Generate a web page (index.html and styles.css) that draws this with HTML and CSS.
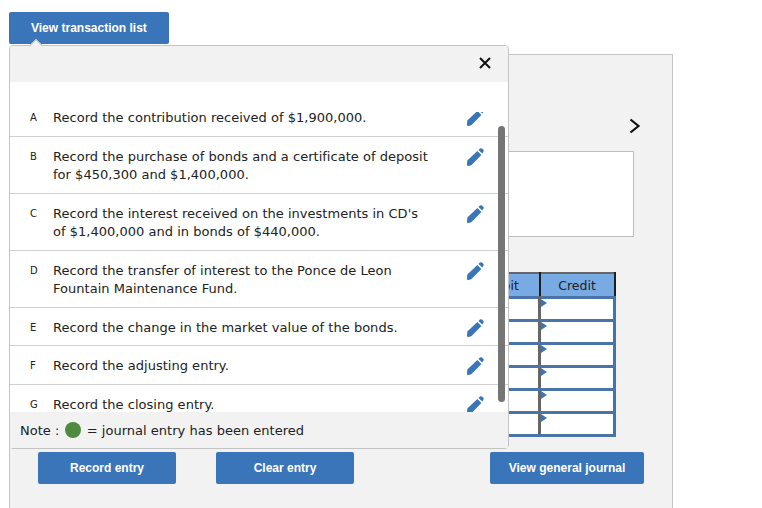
FILE: index.html
```html
<!DOCTYPE html>
<html lang="en">
<head>
<meta charset="utf-8">
<title>Journal entry worksheet</title>
<link rel="stylesheet" href="styles.css">
</head>
<body>
<svg class="defs" width="0" height="0" aria-hidden="true">
  <symbol id="pencil" viewBox="0 0 17 18">
    <path d="M0.3 12.6 L10.4 2.9 L14.4 7 L4.6 17.1 Q2.6 18 0.9 18 Q0 18 0 16.8 Z" fill="#3b75b9"/>
    <path d="M11.5 1.9 L12.9 0.6 Q14 -0.3 15.1 0.6 L16.2 1.7 Q17.2 2.8 16.3 3.9 L15.2 5.6 Z" fill="#3b75b9"/>
  </symbol>
</svg>
<button class="btn btn-list" type="button">View transaction list</button>
<main class="panel">
  <div class="nav">
    <svg class="chev" width="12" height="16" viewBox="0 0 12 16"><path d="M1.5 1.5 L9.5 8 L1.5 14.5" fill="none" stroke="#111" stroke-width="2.2"/></svg>
  </div>
  <div class="box"></div>
  <table class="journal">
    <thead>
      <tr><th class="c-no"></th><th class="c-date"></th><th class="c-acct"></th><th class="c-amt">Debit</th><th class="c-amt">Credit</th></tr>
    </thead>
    <tbody>
      <tr><td></td><td></td><td></td><td></td><td class="tick"></td></tr>
      <tr><td></td><td></td><td></td><td></td><td class="tick"></td></tr>
      <tr><td></td><td></td><td></td><td></td><td class="tick"></td></tr>
      <tr><td></td><td></td><td></td><td></td><td class="tick"></td></tr>
      <tr><td></td><td></td><td></td><td></td><td class="tick"></td></tr>
      <tr><td></td><td></td><td></td><td></td><td class="tick"></td></tr>
    </tbody>
  </table>
  <div class="actions">
    <button class="btn btn-act" type="button">Record entry</button>
    <button class="btn btn-act" type="button">Clear entry</button>
    <button class="btn btn-journal" type="button">View general journal</button>
  </div>
</main>
<section class="pop">
  <span class="pop-arrow"></span>
  <header class="pop-head">
    <svg class="close" width="12" height="12" viewBox="0 0 12 12"><path d="M1 1 L11 11 M11 1 L1 11" fill="none" stroke="#111" stroke-width="2"/></svg>
  </header>
  <div class="pop-list">
    <div class="row row-first"><span class="key">A</span><p>Record the contribution received of $1,900,000.</p><svg class="pen pen-clip"><use href="#pencil"/></svg></div>
    <div class="row"><span class="key">B</span><p>Record the purchase of bonds and a certificate of deposit for $450,300 and $1,400,000.</p><svg class="pen"><use href="#pencil"/></svg></div>
    <div class="row"><span class="key">C</span><p>Record the interest received on the investments in CD's of $1,400,000 and in bonds of $440,000.</p><svg class="pen"><use href="#pencil"/></svg></div>
    <div class="row"><span class="key">D</span><p>Record the transfer of interest to the Ponce de Leon Fountain Maintenance Fund.</p><svg class="pen"><use href="#pencil"/></svg></div>
    <div class="row"><span class="key">E</span><p>Record the change in the market value of the bonds.</p><svg class="pen"><use href="#pencil"/></svg></div>
    <div class="row"><span class="key">F</span><p>Record the adjusting entry.</p><svg class="pen"><use href="#pencil"/></svg></div>
    <div class="row"><span class="key">G</span><p>Record the closing entry.</p><svg class="pen"><use href="#pencil"/></svg></div>
    <span class="scroll"></span>
  </div>
  <footer class="note">Note : <span class="dot"></span> = journal entry has been entered</footer>
</section>
</body>
</html>
```
FILE: styles.css
```css
html, body { margin: 0; height: 508px; overflow: hidden; background: #fff; }
body {
  position: relative;
  box-sizing: border-box;
  padding: 12px 0 0 9px;
  display: flex;
  flex-direction: column;
  align-items: flex-start;
  font-family: "DejaVu Sans", Verdana, sans-serif;
  font-size: 13px;
  color: #222;
}
.defs { position: absolute; }
.btn {
  border: 0;
  border-radius: 2px;
  background: #3b75b9;
  color: #fff;
  font-family: "Liberation Sans", Arial, sans-serif;
  font-weight: 700;
  font-size: 12px;
  padding: 0;
  height: 32px;
}
.btn-list { width: 160px; flex: none; text-align: left; padding-left: 22px; }
.panel {
  box-sizing: border-box;
  flex: 1;
  width: 664px;
  margin-top: 10px;
  border: 1px solid #c4c4c4;
  border-bottom: 0;
  background: #f2f2f2;
  display: flex;
  flex-direction: column;
}
.nav {
  box-sizing: border-box;
  height: 96px;
  padding: 63px 31px 0 0;
  display: flex;
  justify-content: flex-end;
  align-items: flex-start;
}
.chev { display: block; }
.box {
  box-sizing: border-box;
  align-self: flex-end;
  width: 584px;
  height: 86px;
  margin-right: 38px;
  border: 1px solid #bdbdbd;
  background: #fff;
}
.journal {
  align-self: flex-end;
  width: 570px;
  margin: 35px 56px 0 0;
  border-collapse: collapse;
  table-layout: fixed;
}
.journal th {
  height: 22px;
  padding: 0;
  background: #78abe3;
  border: 2px solid #1f1f1f;
  border-top-color: #666;
  font-weight: 400;
  font-size: 12.5px;
  color: #222;
}
.journal td {
  height: 20px;
  padding: 0;
  background: #fff;
  border: 3px solid #4a74a8;
  border-left-color: #666;
  border-right-color: #666;
}
.journal td:last-child { border-right-color: #3b75b9; }
.c-no { width: 30px; }
.c-date { width: 60px; }
.c-amt { width: 73px; }
.tick { position: relative; }
.tick::before {
  content: "";
  position: absolute;
  top: 0;
  left: 0;
  border-left: 6px solid #3b75b9;
  border-top: 4px solid transparent;
  border-bottom: 4px solid transparent;
}
.actions { display: flex; margin: 15px 0 0 28px; }
.btn-act { width: 138px; margin-right: 40px; }
.btn-journal { width: 154px; margin-left: 96px; }
.pop {
  position: absolute;
  left: 9px;
  top: 45px;
  width: 500px;
  height: 404px;
  box-sizing: border-box;
  border: 1px solid #c4c4c4;
  border-radius: 4px;
  background: #fff;
  display: flex;
  flex-direction: column;
  letter-spacing: 0.02px;
}
.pop-arrow {
  position: absolute;
  left: 21px;
  top: -5px;
  width: 9px;
  height: 9px;
  background: #f2f2f2;
  border-left: 1px solid #c4c4c4;
  border-top: 1px solid #c4c4c4;
  transform: rotate(45deg);
}
.pop-head {
  height: 36px;
  flex: none;
  display: flex;
  justify-content: flex-end;
  padding: 11px 17px 0 0;
  box-sizing: border-box;
  background: #f2f2f2;
  border-radius: 4px 4px 0 0;
}
.close { display: block; }
.pop-list { position: relative; flex: 1; overflow: hidden; }
.row {
  position: relative;
  display: flex;
  padding: 10.75px 0 8.25px;
  border-bottom: 1px solid #d0d0d0;
  line-height: 18.5px;
}
.row-first { padding: 27px 0 8.25px; }
.key { width: 43px; flex: none; padding-left: 20px; box-sizing: border-box; font-size: 10px; }
.row p { margin: 0; width: 378px; }
.pen { position: absolute; left: 457px; top: 11px; width: 17px; height: 18px; }
.row-first .pen { top: 26px; }
.pen-clip { clip-path: inset(4px 0 0 0); }
.scroll {
  position: absolute;
  left: 488px;
  top: 44px;
  width: 7px;
  height: 276px;
  border-radius: 4px;
  background: #757575;
}
.note {
  height: 36px;
  flex: none;
  box-sizing: border-box;
  padding: 0 0 0 10px;
  display: flex;
  align-items: center;
  white-space: pre;
  background: #f2f2f2;
  color: #222;
}
.dot { width: 16px; height: 16px; border-radius: 50%; background: #4f8a3f; margin: 0 2px 0 1px; }
```
